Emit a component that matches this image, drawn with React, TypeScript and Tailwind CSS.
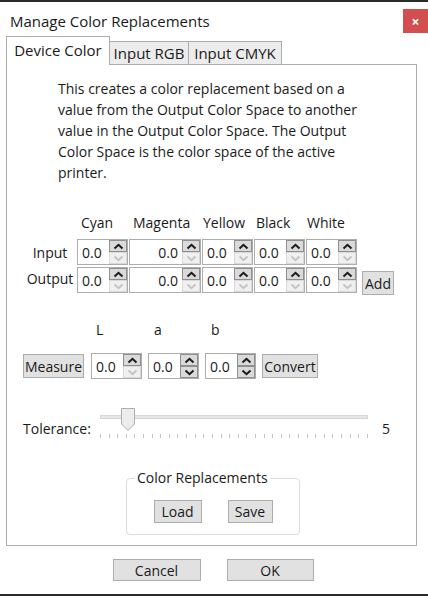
import React from "react";

const font = { fontFamily: '"Open Sans", "Noto Sans", "Liberation Sans", sans-serif' };

function Arrow({ up, dim }: { up: boolean; dim?: boolean }) {
  return (
    <svg width="11" height="7" viewBox="0 0 11 7">
      <polyline
        points={up ? "1.5,5.5 5.5,1.8 9.5,5.5" : "1.5,1.5 5.5,5.2 9.5,1.5"}
        fill="none"
        stroke={dim ? "#c4c4c4" : "#1a1a1a"}
        strokeWidth="2"
      />
    </svg>
  );
}

function Spin({ w = "w-[51px]", right, both }: { w?: string; right?: boolean; both?: boolean }) {
  return (
    <div className={`flex h-[26px] border border-[#adadad] bg-white ${w}`}>
      <div className={`flex flex-1 items-center px-[4px] text-[14px] ${right ? "justify-end" : ""}`}>0.0</div>
      <div className="flex w-[18px] flex-col">
        <div className="flex flex-1 items-center justify-center border border-[#8f8f8f] bg-[#dadada]">
          <Arrow up />
        </div>
        <div
          className={`flex flex-1 items-center justify-center ${
            both ? "border border-[#8f8f8f] bg-[#dadada]" : "border border-[#d9d9d9] bg-[#f0f0f0]"
          }`}
        >
          <Arrow up={false} dim={!both} />
        </div>
      </div>
    </div>
  );
}

function Btn({ children, className = "" }: { children: React.ReactNode; className?: string }) {
  return (
    <div
      className={`flex items-center justify-center border border-[#adadad] bg-[#e1e1e1] text-[14px] text-[#1a1a1a] ${className}`}
    >
      {children}
    </div>
  );
}

export default function App() {
  const ticks = Array.from({ length: 32 });
  return (
    <div className="relative flex h-[596px] w-[428px] flex-col bg-white text-[#1a1a1a]" style={font}>
      <div className="h-[2px] bg-[#2b2b2b]" />
      {/* Title bar */}
      <div className="flex h-[34px] items-start justify-between">
        <div className="pl-[10px] pt-[8px] text-[15px]">Manage Color Replacements</div>
        <div className="mt-[7px] flex h-[24px] w-[25px] items-center justify-center bg-[#d24f4f] text-[14px] font-bold text-white">
          ×
        </div>
      </div>

      {/* Tabs */}
      <div className="flex h-[29px] items-end pl-[6px]">
        <div className="relative z-10 flex h-[29px] w-[104px] items-center justify-center border border-b-0 border-[#acacac] bg-white pb-[2px] text-[15px]">
          Device Color
        </div>
        <div className="flex h-[24px] w-[79px] items-center justify-center border-t border-r border-[#acacac] bg-[#ececec] text-[15px]">
          Input RGB
        </div>
        <div className="flex h-[24px] w-[93px] items-center justify-center border-t border-r border-[#acacac] bg-[#ececec] text-[15px]">
          Input CMYK
        </div>
      </div>

      {/* Panel */}
      <div className="mx-[6px] -mt-[1px] flex h-[482px] w-[411px] flex-col border border-[#acacac]">
        <div className="pl-[51px] pt-[13px] text-[14px] leading-[21px]">
          <div>This creates a color replacement based on a</div>
          <div>value from the Output Color Space to another</div>
          <div>value in the Output Color Space. The Output</div>
          <div>Color Space is the color space of the active</div>
          <div>printer.</div>
        </div>

        {/* CMYK headers */}
        <div className="mt-[29px] flex h-[20px] pl-[69px] text-[14px]">
          <div className="w-[51px] pl-[5px]">Cyan</div>
          <div className="w-[72px] pl-[6px]">Magenta</div>
          <div className="w-[52px] pl-[4px]">Yellow</div>
          <div className="w-[52px] pl-[5px]">Black</div>
          <div className="w-[52px] pl-[4px]">White</div>
        </div>

        <div className="mt-[7px] flex items-start pl-[16px]">
          <div className="flex w-[54px] flex-col text-[14px]">
            <div className="flex h-[26px] items-center justify-center">Input</div>
            <div className="flex h-[26px] items-center justify-center">Output</div>
          </div>
          <div className="flex flex-col gap-[2px]">
            <div className="flex gap-[1px]">
              <Spin />
              <Spin w="w-[72px]" right />
              <Spin />
              <Spin />
              <Spin />
            </div>
            <div className="flex gap-[1px]">
              <Spin />
              <Spin w="w-[72px]" right />
              <Spin />
              <Spin />
              <Spin />
            </div>
          </div>
          <Btn className="ml-[5px] mt-[32px] h-[24px] w-[32px]">Add</Btn>
        </div>

        {/* Lab */}
        <div className="mt-[24px] flex h-[20px] text-[14px]">
          <div className="ml-[89px] w-[58px]">L</div>
          <div className="w-[57px]">a</div>
          <div>b</div>
        </div>
        <div className="mt-[14px] flex items-center pl-[16px]">
          <Btn className="h-[24px] w-[61px]">Measure</Btn>
          <div className="ml-[7px]">
            <Spin w="w-[51px]" />
          </div>
          <div className="ml-[6px]">
            <Spin w="w-[51px]" both />
          </div>
          <div className="ml-[6px]">
            <Spin w="w-[51px]" both />
          </div>
          <Btn className="ml-[6px] h-[24px] w-[56px]">Convert</Btn>
        </div>

        {/* Tolerance */}
        <div className="mt-[28px] flex items-center pl-[16px]">
          <div className="w-[77px] pt-[9px] text-[14px]">Tolerance:</div>
          <div className="relative h-[34px] w-[268px]">
            <div className="absolute left-0 right-0 top-[8px] h-[4px] border border-[#d6d6d6] bg-[#e7e7e7]" />
            <svg className="absolute left-[20px] top-0" width="16" height="25" viewBox="0 0 16 25">
              <path d="M1.5 1.5 H14.5 V17 L8 23.5 L1.5 17 Z" fill="#ececec" stroke="#adadad" strokeWidth="1" />
            </svg>
            <div className="absolute left-0 right-0 top-[27px] flex justify-between">
              {ticks.map((_, i) => (
                <div key={i} className="h-[4px] w-[1px] bg-[#c4c4c4]" />
              ))}
            </div>
          </div>
          <div className="ml-[14px] pt-[9px] text-[14px]">5</div>
        </div>

        {/* Group box */}
        <div className="mt-[37px] flex justify-center">
          <div className="relative ml-[3px] h-[57px] w-[174px] rounded-[4px] border border-[#dcdcdc]">
            <div className="absolute -top-[12px] left-[8px] bg-white px-[2px] text-[14px]">Color Replacements</div>
            <div className="flex justify-center gap-[26px] pt-[21px]">
              <Btn className="h-[23px] w-[48px]">Load</Btn>
              <Btn className="h-[23px] w-[45px]">Save</Btn>
            </div>
          </div>
        </div>
      </div>

      {/* Bottom buttons */}
      <div className="mt-[13px] flex justify-center gap-[26px] pr-[2px]">
        <Btn className="h-[22px] w-[88px]">Cancel</Btn>
        <Btn className="h-[22px] w-[87px]">OK</Btn>
      </div>
      <div className="absolute bottom-0 left-0 right-0 h-[2px] bg-[#2b2b2b]" />
    </div>
  );
}
